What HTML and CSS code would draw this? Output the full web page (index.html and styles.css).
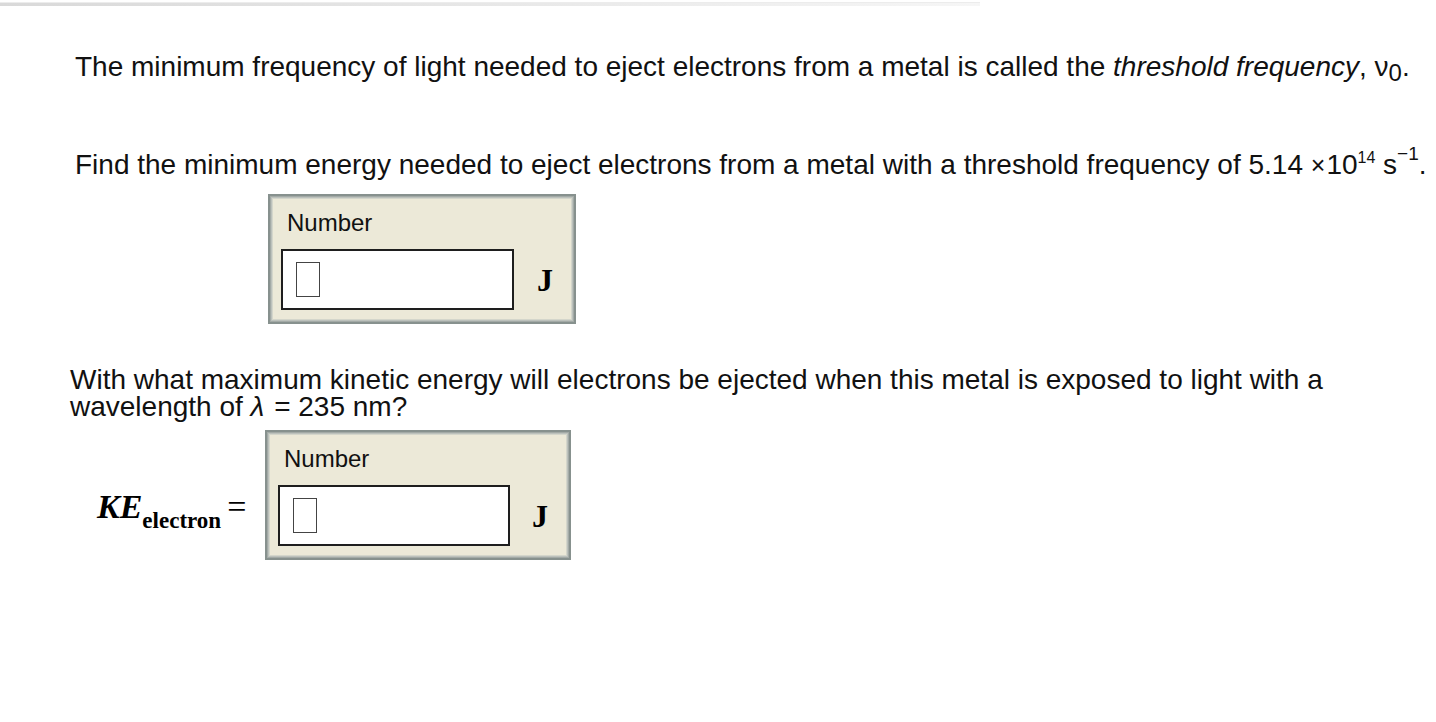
FILE: index.html
```html
<!DOCTYPE html>
<html>
<head>
<meta charset="utf-8">
<link rel="stylesheet" href="styles.css">
</head>
<body>
<div class="topbar"></div>
<div class="page">
  <p class="q q1">The minimum frequency of light needed to eject electrons from a metal is called the <i>threshold frequency</i>, ν<sub class="sub0">0</sub>.</p>
  <p class="q q2">Find the minimum energy needed to eject electrons from a metal with a threshold frequency of 5.14 <span class="times">×</span>10<sup class="sup14">14</sup> s<sup class="supm1">−1</sup>.</p>
  <div class="answer answer1">
    <div class="label">Number</div>
    <div class="entry">
      <div class="field"><span class="caret"></span></div>
      <span class="unit">J</span>
    </div>
  </div>
  <p class="q q3">With what maximum kinetic energy will electrons be ejected when this metal is exposed to light with a wavelength of <i class="lambda">λ</i> = 235 nm?</p>
  <div class="row">
    <div class="ke"><span class="ke-main">KE</span><span class="ke-sub">electron</span><span class="ke-eq">=</span></div>
    <div class="answer answer2">
      <div class="label">Number</div>
      <div class="entry">
        <div class="field"><span class="caret"></span></div>
        <span class="unit">J</span>
      </div>
    </div>
  </div>
</div>
</body>
</html>
```
FILE: styles.css
```css
html, body {
  margin: 0;
  padding: 0;
  background: #ffffff;
}
body {
  font-family: "Liberation Sans", Arial, sans-serif;
  color: #111;
}
.topbar {
  margin-top: 2px;
  width: 980px;
  height: 4px;
  background: linear-gradient(to right, #d9d9d9, #f6f6f6);
  border-top: 1px solid #ececec;
  box-sizing: border-box;
}
.q {
  margin: 0;
  font-size: 28px;
  line-height: 30px;
  white-space: nowrap;
}
.q1 {
  margin-top: 46px;
  margin-left: 75px;
}
.q2 {
  margin-top: 68px;
  margin-left: 75px;
}
.q3 {
  margin-top: 42px;
  margin-left: 70px;
  width: 1300px;
  white-space: normal;
  line-height: 27px;
}
.lambda {
  margin-right: 2px;
}
.sub0 {
  font-size: 24px;
  vertical-align: -5px;
  line-height: 0;
}
.times {
  font-size: 25px;
  margin-right: 1px;
}
.sup14 {
  font-size: 16px;
  vertical-align: 11px;
  line-height: 0;
}
.supm1 {
  font-size: 19px;
  vertical-align: 14px;
  line-height: 0;
}
.answer {
  box-sizing: border-box;
  width: 308px;
  height: 130px;
  background: #ece9d8;
  border: 2px solid #87918e;
  box-shadow: inset 0 0 0 1px #a3aaa6, inset 0 0 0 2px #bcc1bc, inset 0 0 0 3px #d4d6cb;
  padding: 14px 0 0 11px;
}
.answer1 {
  margin-top: 14px;
  margin-left: 268px;
}
.answer2 {
  width: 306px;
}
.label {
  font-size: 24px;
  line-height: 26px;
  padding-left: 6px;
  color: #111;
}
.entry {
  margin-top: 13px;
  display: flex;
  align-items: center;
}
.field {
  box-sizing: border-box;
  width: 233px;
  height: 61px;
  background: #fff;
  border: 2px solid #1e1e1e;
  padding: 11px 0 0 13px;
}
.answer2 .field {
  width: 232px;
}
.caret {
  display: block;
  box-sizing: border-box;
  width: 24px;
  height: 35px;
  border: 1px solid #444;
  background: #fff;
}
.unit {
  margin-left: 23px;
  font-family: "Liberation Serif", "Times New Roman", serif;
  font-weight: bold;
  font-size: 32px;
  line-height: 30px;
  color: #000;
}
.answer2 .unit {
  margin-left: 22px;
}
.row {
  margin-top: 10px;
  display: flex;
  align-items: flex-start;
  padding-left: 97px;
}
.ke {
  width: 168px;
  margin-top: 57px;
  font-family: "Liberation Serif", "Times New Roman", serif;
  font-size: 34px;
  line-height: 40px;
  white-space: nowrap;
  color: #000;
}
.ke-main {
  font-weight: bold;
  font-style: italic;
}
.ke-sub {
  font-weight: bold;
  font-size: 23px;
  vertical-align: -10px;
  line-height: 0;
}
.ke-eq {
  margin-left: 6px;
}
```
